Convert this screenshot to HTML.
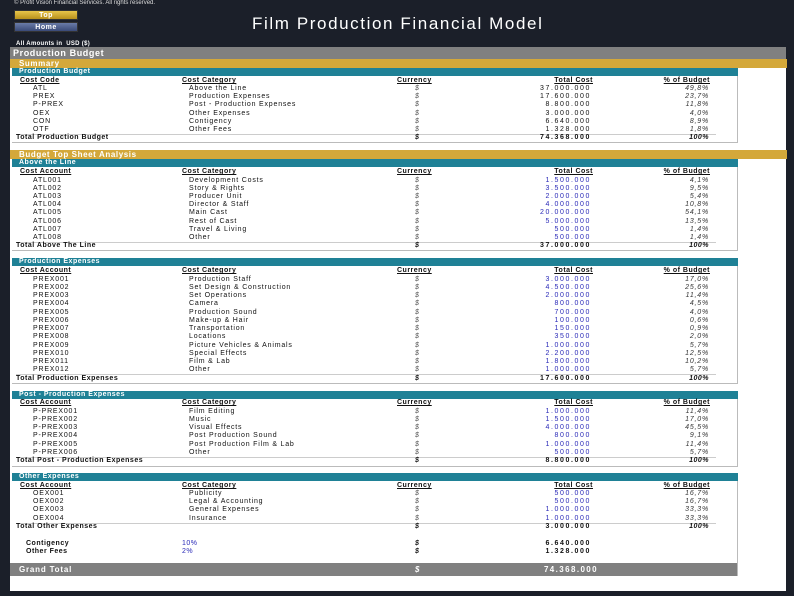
<!DOCTYPE html>
<html><head><meta charset="utf-8"><style>
*{margin:0;padding:0;box-sizing:border-box}
body{width:794px;height:596px;background:#1b1f29;font-family:"Liberation Sans",sans-serif;position:relative;overflow:hidden;color:#111}
.a{position:absolute;white-space:nowrap}
.copy{left:14px;top:0;font-size:6px;color:#ddd}
.btn{left:14px;width:64px;height:10px;font-size:7px;font-weight:bold;text-align:center;line-height:10px;color:#fff;border:1px solid #333;letter-spacing:.5px}
.title{left:252px;top:14px;font-size:17px;color:#fff;letter-spacing:1.6px}
.amt{left:16px;top:41px;font-size:6px;color:#fff;font-weight:bold;letter-spacing:.3px}
.panel{left:10px;top:47px;width:776px;height:544px;background:#fff}
.grey{left:10px;top:47px;width:776px;height:12px;background:#808080;color:#fff;font-weight:bold;font-size:9px;padding-left:3px;line-height:12px;letter-spacing:.6px}
.gold{left:10px;width:777px;height:9px;background:#d4a83a;color:#fff;font-weight:bold;font-size:8px;padding-left:9px;line-height:9px;letter-spacing:.6px}
.teal{left:12px;width:726px;height:8px;background:#1f8196;color:#fff;font-weight:bold;font-size:7px;padding-left:7px;line-height:8px;letter-spacing:.5px}
.box{left:12px;width:726px;border-right:1px solid #bbb;border-bottom:1px solid #bbb}
.r{position:absolute;left:0;width:794px;height:8px;font-size:7px;line-height:8px}
.r span{position:absolute;white-space:nowrap;letter-spacing:.8px}
.h span{font-weight:bold;text-decoration:underline;letter-spacing:.5px}
.c{left:33px}.k{left:189px}.d{left:415px;font-style:italic;color:#555}
.r .t{left:470px;width:121px;text-align:right;letter-spacing:1.6px}
.p{left:620px;width:89px;text-align:right;font-style:italic;color:#333}
.h .c{left:20px}.h .k{left:182px}.h .d{left:397px;font-style:normal;color:#111}.h .t{left:470px;width:123px;letter-spacing:.5px}.h .p{left:620px;width:90px;font-style:normal;color:#111}
.b{color:#2a2ab8}
.tot span{font-weight:bold;letter-spacing:.5px}.tot .c{left:16px}.tot .d{color:#111}.tot .p{color:#111}
.line{position:absolute;left:16px;width:700px;height:1px;background:#ccc}
.gt{left:10px;top:563px;width:727px;height:13px;background:#808080;color:#fff;font-weight:bold;font-size:8px;line-height:13px;letter-spacing:.8px}
</style></head><body>
<div class="a copy">© Profit Vision Financial Services. All rights reserved.</div>
<div class="a btn" style="top:10px;background:linear-gradient(#e8c54a,#b8901c)">Top</div>
<div class="a btn" style="top:22px;background:linear-gradient(#6a7ca8,#3a4a78)">Home</div>
<div class="a title">Film Production Financial Model</div>
<div class="a amt">All Amounts in &nbsp;USD ($)</div>
<div class="a panel"></div>
<div class="a grey">Production Budget</div>
<div class="a gold" style="top:59px">Summary</div>
<div class="a teal" style="top:68px">Production Budget</div>
<div class="a box" style="top:76px;height:67px"></div>
<div class="r h" style="top:77px"><span class="c">Cost Code</span><span class="k">Cost Category</span><span class="d">Currency</span><span class="t">Total Cost</span><span class="p">% of Budget</span></div>
<div class="r" style="top:85px"><span class="c">ATL</span><span class="k">Above the Line</span><span class="d">$</span><span class="t">37.000.000</span><span class="p">49,8%</span></div>
<div class="r" style="top:93px"><span class="c">PREX</span><span class="k">Production Expenses</span><span class="d">$</span><span class="t">17.600.000</span><span class="p">23,7%</span></div>
<div class="r" style="top:101px"><span class="c">P-PREX</span><span class="k">Post - Production Expenses</span><span class="d">$</span><span class="t">8.800.000</span><span class="p">11,8%</span></div>
<div class="r" style="top:110px"><span class="c">OEX</span><span class="k">Other Expenses</span><span class="d">$</span><span class="t">3.000.000</span><span class="p">4,0%</span></div>
<div class="r" style="top:118px"><span class="c">CON</span><span class="k">Contigency</span><span class="d">$</span><span class="t">6.640.000</span><span class="p">8,9%</span></div>
<div class="r" style="top:126px"><span class="c">OTF</span><span class="k">Other Fees</span><span class="d">$</span><span class="t">1.328.000</span><span class="p">1,8%</span></div>
<div class="line" style="top:134px"></div>
<div class="r tot" style="top:134px"><span class="c">Total Production Budget</span><span class="d">$</span><span class="t">74.368.000</span><span class="p">100%</span></div>

<div class="a gold" style="top:150px">Budget Top Sheet Analysis</div>
<div class="a teal" style="top:159px">Above the Line</div>
<div class="a box" style="top:167px;height:84px"></div>
<div class="r h" style="top:168px"><span class="c">Cost Account</span><span class="k">Cost Category</span><span class="d">Currency</span><span class="t">Total Cost</span><span class="p">% of Budget</span></div>
<div class="r" style="top:177px"><span class="c">ATL001</span><span class="k">Development Costs</span><span class="d">$</span><span class="t b">1.500.000</span><span class="p">4,1%</span></div>
<div class="r" style="top:185px"><span class="c">ATL002</span><span class="k">Story &amp; Rights</span><span class="d">$</span><span class="t b">3.500.000</span><span class="p">9,5%</span></div>
<div class="r" style="top:193px"><span class="c">ATL003</span><span class="k">Producer Unit</span><span class="d">$</span><span class="t b">2.000.000</span><span class="p">5,4%</span></div>
<div class="r" style="top:201px"><span class="c">ATL004</span><span class="k">Director &amp; Staff</span><span class="d">$</span><span class="t b">4.000.000</span><span class="p">10,8%</span></div>
<div class="r" style="top:209px"><span class="c">ATL005</span><span class="k">Main Cast</span><span class="d">$</span><span class="t b">20.000.000</span><span class="p">54,1%</span></div>
<div class="r" style="top:218px"><span class="c">ATL006</span><span class="k">Rest of Cast</span><span class="d">$</span><span class="t b">5.000.000</span><span class="p">13,5%</span></div>
<div class="r" style="top:226px"><span class="c">ATL007</span><span class="k">Travel &amp; Living</span><span class="d">$</span><span class="t b">500.000</span><span class="p">1,4%</span></div>
<div class="r" style="top:234px"><span class="c">ATL008</span><span class="k">Other</span><span class="d">$</span><span class="t b">500.000</span><span class="p">1,4%</span></div>
<div class="line" style="top:242px"></div>
<div class="r tot" style="top:242px"><span class="c">Total Above The Line</span><span class="d">$</span><span class="t">37.000.000</span><span class="p">100%</span></div>

<div class="a teal" style="top:258px">Production Expenses</div>
<div class="a box" style="top:266px;height:118px"></div>
<div class="r h" style="top:267px"><span class="c">Cost Account</span><span class="k">Cost Category</span><span class="d">Currency</span><span class="t">Total Cost</span><span class="p">% of Budget</span></div>
<div class="r" style="top:276px"><span class="c">PREX001</span><span class="k">Production Staff</span><span class="d">$</span><span class="t b">3.000.000</span><span class="p">17,0%</span></div>
<div class="r" style="top:284px"><span class="c">PREX002</span><span class="k">Set Design &amp; Construction</span><span class="d">$</span><span class="t b">4.500.000</span><span class="p">25,6%</span></div>
<div class="r" style="top:292px"><span class="c">PREX003</span><span class="k">Set Operations</span><span class="d">$</span><span class="t b">2.000.000</span><span class="p">11,4%</span></div>
<div class="r" style="top:300px"><span class="c">PREX004</span><span class="k">Camera</span><span class="d">$</span><span class="t b">800.000</span><span class="p">4,5%</span></div>
<div class="r" style="top:309px"><span class="c">PREX005</span><span class="k">Production Sound</span><span class="d">$</span><span class="t b">700.000</span><span class="p">4,0%</span></div>
<div class="r" style="top:317px"><span class="c">PREX006</span><span class="k">Make-up &amp; Hair</span><span class="d">$</span><span class="t b">100.000</span><span class="p">0,6%</span></div>
<div class="r" style="top:325px"><span class="c">PREX007</span><span class="k">Transportation</span><span class="d">$</span><span class="t b">150.000</span><span class="p">0,9%</span></div>
<div class="r" style="top:333px"><span class="c">PREX008</span><span class="k">Locations</span><span class="d">$</span><span class="t b">350.000</span><span class="p">2,0%</span></div>
<div class="r" style="top:342px"><span class="c">PREX009</span><span class="k">Picture Vehicles &amp; Animals</span><span class="d">$</span><span class="t b">1.000.000</span><span class="p">5,7%</span></div>
<div class="r" style="top:350px"><span class="c">PREX010</span><span class="k">Special Effects</span><span class="d">$</span><span class="t b">2.200.000</span><span class="p">12,5%</span></div>
<div class="r" style="top:358px"><span class="c">PREX011</span><span class="k">Film &amp; Lab</span><span class="d">$</span><span class="t b">1.800.000</span><span class="p">10,2%</span></div>
<div class="r" style="top:366px"><span class="c">PREX012</span><span class="k">Other</span><span class="d">$</span><span class="t b">1.000.000</span><span class="p">5,7%</span></div>
<div class="line" style="top:374px"></div>
<div class="r tot" style="top:375px"><span class="c">Total Production Expenses</span><span class="d">$</span><span class="t">17.600.000</span><span class="p">100%</span></div>

<div class="a teal" style="top:391px">Post - Production Expenses</div>
<div class="a box" style="top:399px;height:68px"></div>
<div class="r h" style="top:399px"><span class="c">Cost Account</span><span class="k">Cost Category</span><span class="d">Currency</span><span class="t">Total Cost</span><span class="p">% of Budget</span></div>
<div class="r" style="top:408px"><span class="c">P-PREX001</span><span class="k">Film Editing</span><span class="d">$</span><span class="t b">1.000.000</span><span class="p">11,4%</span></div>
<div class="r" style="top:416px"><span class="c">P-PREX002</span><span class="k">Music</span><span class="d">$</span><span class="t b">1.500.000</span><span class="p">17,0%</span></div>
<div class="r" style="top:424px"><span class="c">P-PREX003</span><span class="k">Visual Effects</span><span class="d">$</span><span class="t b">4.000.000</span><span class="p">45,5%</span></div>
<div class="r" style="top:432px"><span class="c">P-PREX004</span><span class="k">Post Production Sound</span><span class="d">$</span><span class="t b">800.000</span><span class="p">9,1%</span></div>
<div class="r" style="top:441px"><span class="c">P-PREX005</span><span class="k">Post Production Film &amp; Lab</span><span class="d">$</span><span class="t b">1.000.000</span><span class="p">11,4%</span></div>
<div class="r" style="top:449px"><span class="c">P-PREX006</span><span class="k">Other</span><span class="d">$</span><span class="t b">500.000</span><span class="p">5,7%</span></div>
<div class="line" style="top:457px"></div>
<div class="r tot" style="top:457px"><span class="c">Total Post - Production Expenses</span><span class="d">$</span><span class="t">8.800.000</span><span class="p">100%</span></div>

<div class="a teal" style="top:473px">Other Expenses</div>
<div class="a box" style="top:481px;height:95px"></div>
<div class="r h" style="top:482px"><span class="c">Cost Account</span><span class="k">Cost Category</span><span class="d">Currency</span><span class="t">Total Cost</span><span class="p">% of Budget</span></div>
<div class="r" style="top:490px"><span class="c">OEX001</span><span class="k">Publicity</span><span class="d">$</span><span class="t b">500.000</span><span class="p">16,7%</span></div>
<div class="r" style="top:498px"><span class="c">OEX002</span><span class="k">Legal &amp; Accounting</span><span class="d">$</span><span class="t b">500.000</span><span class="p">16,7%</span></div>
<div class="r" style="top:506px"><span class="c">OEX003</span><span class="k">General Expenses</span><span class="d">$</span><span class="t b">1.000.000</span><span class="p">33,3%</span></div>
<div class="r" style="top:515px"><span class="c">OEX004</span><span class="k">Insurance</span><span class="d">$</span><span class="t b">1.000.000</span><span class="p">33,3%</span></div>
<div class="line" style="top:523px"></div>
<div class="r tot" style="top:523px"><span class="c">Total Other Expenses</span><span class="d">$</span><span class="t">3.000.000</span><span class="p">100%</span></div>
<div class="r tot" style="top:540px"><span class="c" style="left:26px">Contigency</span><span class="k b" style="left:182px;font-weight:normal">10%</span><span class="d">$</span><span class="t">6.640.000</span></div>
<div class="r tot" style="top:548px"><span class="c" style="left:26px">Other Fees</span><span class="k b" style="left:182px;font-weight:normal">2%</span><span class="d">$</span><span class="t">1.328.000</span></div>
<div class="a gt"><span style="position:absolute;left:9px">Grand Total</span><span style="position:absolute;left:405px;font-style:italic">$</span><span style="position:absolute;left:460px;width:128px;text-align:right;letter-spacing:1.4px">74.368.000</span></div>
</body></html>
